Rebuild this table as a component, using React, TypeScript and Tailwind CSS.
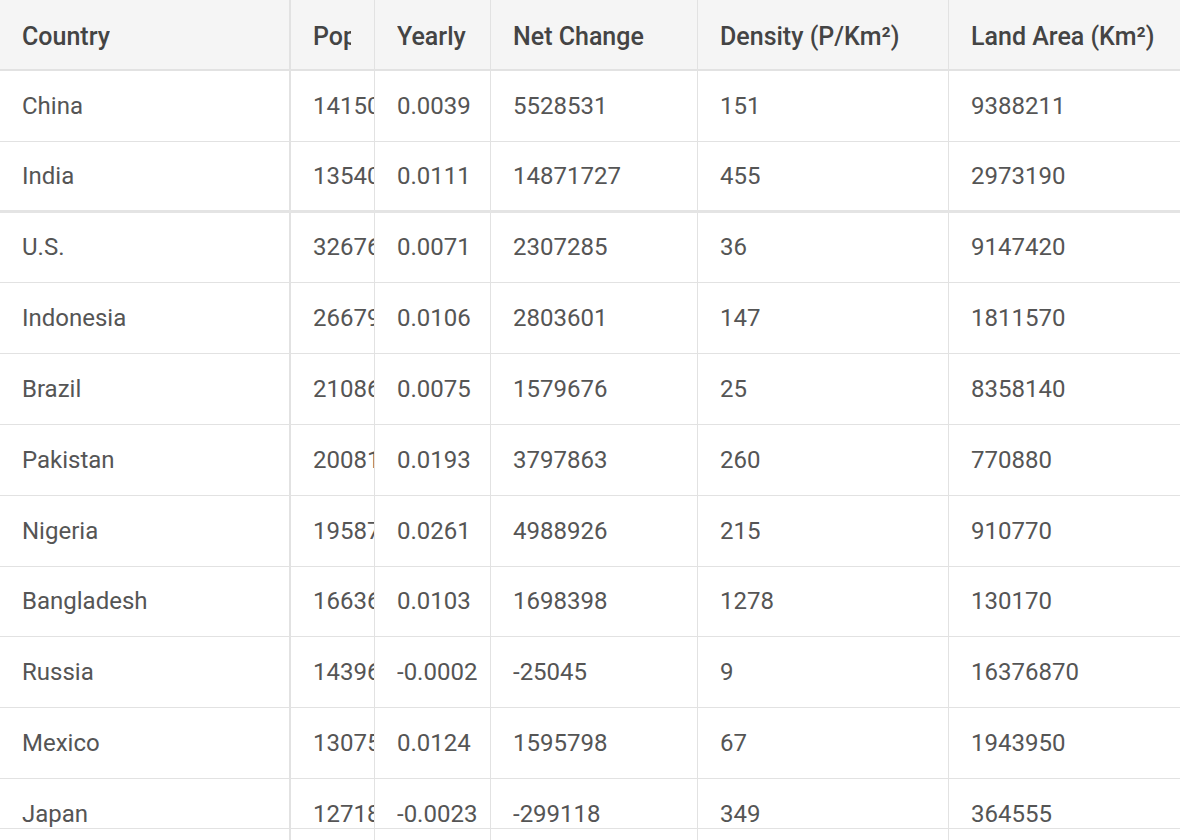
import React from "react";

interface Row {
  country: string;
  population: number;
  yearly: string;
  netChange: number;
  density: number;
  landArea: number;
}

const rows: Row[] = [
  { country: "China", population: 1415045928, yearly: "0.0039", netChange: 5528531, density: 151, landArea: 9388211 },
  { country: "India", population: 1354051854, yearly: "0.0111", netChange: 14871727, density: 455, landArea: 2973190 },
  { country: "U.S.", population: 326766748, yearly: "0.0071", netChange: 2307285, density: 36, landArea: 9147420 },
  { country: "Indonesia", population: 266794980, yearly: "0.0106", netChange: 2803601, density: 147, landArea: 1811570 },
  { country: "Brazil", population: 210867954, yearly: "0.0075", netChange: 1579676, density: 25, landArea: 8358140 },
  { country: "Pakistan", population: 200813818, yearly: "0.0193", netChange: 3797863, density: 260, landArea: 770880 },
  { country: "Nigeria", population: 195875237, yearly: "0.0261", netChange: 4988926, density: 215, landArea: 910770 },
  { country: "Bangladesh", population: 166368149, yearly: "0.0103", netChange: 1698398, density: 1278, landArea: 130170 },
  { country: "Russia", population: 143964709, yearly: "-0.0002", netChange: -25045, density: 9, landArea: 16376870 },
  { country: "Mexico", population: 130759074, yearly: "0.0124", netChange: 1595798, density: 67, landArea: 1943950 },
  { country: "Japan", population: 127185332, yearly: "-0.0023", netChange: -299118, density: 349, landArea: 364555 },
];

const FROZEN_ROWS = 2;

const Cell = ({ className, children }: { className: string; children: React.ReactNode }) => (
  <div className={`flex h-full shrink-0 items-center overflow-hidden whitespace-nowrap pl-[22px] ${className}`}>
    <span className="block overflow-hidden">{children}</span>
  </div>
);

const columns = (cells: React.ReactNode[], header = false) => {
  const pad = header ? "pr-[23px] pt-[4px]" : "";
  return [
    <Cell key="c" className={`w-[291px] border-r-2 border-[#e2e2e2] ${pad}`}>{cells[0]}</Cell>,
    <Cell key="p" className={`w-[84px] border-r border-[#e2e2e2] ${pad}`}>{cells[1]}</Cell>,
    <Cell key="y" className={`w-[116px] border-r border-[#e2e2e2] ${pad}`}>{cells[2]}</Cell>,
    <Cell key="n" className={`w-[207px] border-r border-[#e2e2e2] ${pad}`}>{cells[3]}</Cell>,
    <Cell key="d" className={`w-[251px] border-r border-[#e2e2e2] ${pad}`}>{cells[4]}</Cell>,
    <Cell key="l" className={`w-[300px] ${header ? "pt-[4px]" : ""}`}>{cells[5]}</Cell>,
  ];
};

export default function App() {
  return (
    <div
      className="relative h-[840px] w-[1180px] overflow-hidden bg-white"
      style={{ fontFamily: "Roboto, 'Liberation Sans', sans-serif" }}
    >
      <div className="flex h-[71px] border-b-2 border-[#e2e2e2] bg-[#f5f5f5] text-[25px] font-medium text-[#444]">
        {columns(["Country", "Population", "Yearly", "Net Change", "Density (P/Km²)", "Land Area (Km²)"], true)}
      </div>
      {rows.map((row, i) => (
        <div
          key={row.country}
          className={`flex h-[70.8px] text-[24px] text-[#555] ${
            i === FROZEN_ROWS - 1 ? "border-b-[3px] border-[#e4e4e4]" : "border-b border-[#e2e2e2]"
          }`}
        >
          {columns([row.country, row.population, row.yearly, row.netChange, row.density, row.landArea])}
        </div>
      ))}
      <div className="absolute inset-x-0 top-[828px] h-px bg-[#e2e2e2]" />
    </div>
  );
}
